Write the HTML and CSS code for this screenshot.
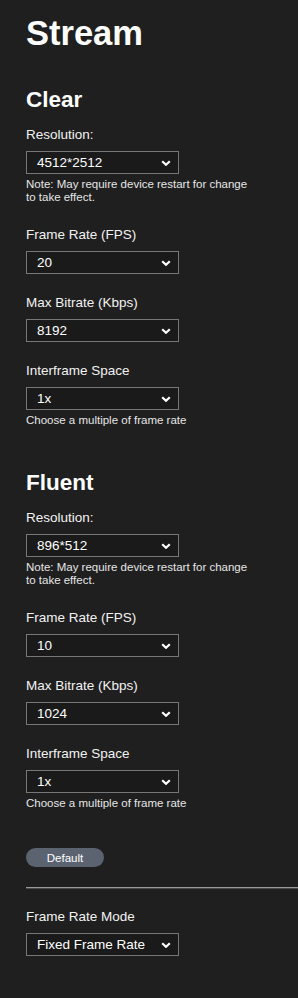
FILE: index.html
```html
<!DOCTYPE html>
<html lang="en">
<head>
<meta charset="UTF-8">
<title>Stream</title>
<link rel="stylesheet" href="styles.css">
</head>
<body>
    <h1 class="page-title">Stream</h1>

    <section class="block">
        <h2 class="block-title">Clear</h2>
        <div class="field">
            <label>Resolution:</label>
            <div class="select-wrap">
                <select><option>4512*2512</option></select>
                <svg class="chevron" viewBox="0 0 10 6"><path d="M1.2 1.2 L5 4.8 L8.8 1.2"/></svg>
            </div>
            <p class="hint">Note: May require device restart for change to take effect.</p>
        </div>
        <div class="field">
            <label>Frame Rate (FPS)</label>
            <div class="select-wrap">
                <select><option>20</option></select>
                <svg class="chevron" viewBox="0 0 10 6"><path d="M1.2 1.2 L5 4.8 L8.8 1.2"/></svg>
            </div>
        </div>
        <div class="field">
            <label>Max Bitrate (Kbps)</label>
            <div class="select-wrap">
                <select><option>8192</option></select>
                <svg class="chevron" viewBox="0 0 10 6"><path d="M1.2 1.2 L5 4.8 L8.8 1.2"/></svg>
            </div>
        </div>
        <div class="field">
            <label>Interframe Space</label>
            <div class="select-wrap">
                <select><option>1x</option></select>
                <svg class="chevron" viewBox="0 0 10 6"><path d="M1.2 1.2 L5 4.8 L8.8 1.2"/></svg>
            </div>
            <p class="hint">Choose a multiple of frame rate</p>
        </div>
    </section>

    <section class="block">
        <h2 class="block-title">Fluent</h2>
        <div class="field">
            <label>Resolution:</label>
            <div class="select-wrap">
                <select><option>896*512</option></select>
                <svg class="chevron" viewBox="0 0 10 6"><path d="M1.2 1.2 L5 4.8 L8.8 1.2"/></svg>
            </div>
            <p class="hint">Note: May require device restart for change to take effect.</p>
        </div>
        <div class="field">
            <label>Frame Rate (FPS)</label>
            <div class="select-wrap">
                <select><option>10</option></select>
                <svg class="chevron" viewBox="0 0 10 6"><path d="M1.2 1.2 L5 4.8 L8.8 1.2"/></svg>
            </div>
        </div>
        <div class="field">
            <label>Max Bitrate (Kbps)</label>
            <div class="select-wrap">
                <select><option>1024</option></select>
                <svg class="chevron" viewBox="0 0 10 6"><path d="M1.2 1.2 L5 4.8 L8.8 1.2"/></svg>
            </div>
        </div>
        <div class="field">
            <label>Interframe Space</label>
            <div class="select-wrap">
                <select><option>1x</option></select>
                <svg class="chevron" viewBox="0 0 10 6"><path d="M1.2 1.2 L5 4.8 L8.8 1.2"/></svg>
            </div>
            <p class="hint">Choose a multiple of frame rate</p>
        </div>
    </section>

    <button class="btn-default">Default</button>

    <hr class="divider">

    <div class="field">
        <label>Frame Rate Mode</label>
        <div class="select-wrap">
            <select><option>Fixed Frame Rate</option></select>
            <svg class="chevron" viewBox="0 0 10 6"><path d="M1.2 1.2 L5 4.8 L8.8 1.2"/></svg>
        </div>
    </div>
</body>
</html>
```

FILE: styles.css
```css
body {
    background-color: #1f1f1f;
    color: #f2f2f2;
    margin: 0;
    padding: 0 0 0 26px;
    font-family: 'Liberation Sans', Arial, sans-serif;
}
.page-title {
    margin: 13px 0 0;
    font-size: 34.5px;
    line-height: 40px;
    font-weight: bold;
    color: #ffffff;
}
.block {
    margin-top: 34px;
}
.block + .block {
    margin-top: 41px;
}
.block-title {
    margin: 0;
    font-size: 22.5px;
    line-height: 26px;
    font-weight: bold;
    color: #ffffff;
}
.field {
    margin-top: 21px;
}
.block-title + .field {
    margin-top: 14px;
}
.field label {
    display: block;
    font-size: 13.5px;
    line-height: 16px;
}
.select-wrap {
    position: relative;
    width: 153px;
    margin-top: 8px;
}
.select-wrap select {
    display: block;
    width: 153px;
    height: 23px;
    margin: 0;
    padding: 0 0 0 10px;
    box-sizing: border-box;
    -webkit-appearance: none;
    appearance: none;
    background-color: #1a1a1a;
    border: 1px solid #777777;
    border-radius: 0;
    color: #ffffff;
    font-family: 'Liberation Sans', Arial, sans-serif;
    font-size: 13.5px;
    outline: none;
}
.chevron {
    position: absolute;
    right: 8px;
    top: 9px;
    width: 10px;
    height: 6px;
    pointer-events: none;
}
.chevron path {
    fill: none;
    stroke: #ffffff;
    stroke-width: 2.2;
}
.hint {
    width: 228px;
    margin: 4px 0 0;
    padding-bottom: 2px;
    font-size: 11.5px;
    line-height: 13px;
    color: #e6e6e6;
}
.btn-default {
    display: block;
    margin-top: 36px;
    width: 78px;
    height: 19px;
    padding: 0;
    border: none;
    border-radius: 10px;
    background-color: #5b6370;
    color: #ffffff;
    font-family: 'Liberation Sans', Arial, sans-serif;
    font-size: 11.5px;
}
.divider {
    margin: 20px 0 0;
    height: 0;
    border: none;
    border-top: 1px solid #9a9a9a;
    border-bottom: 1px solid #4a4a4a;
}
.divider + .field {
    margin-top: 20px;
}
```
